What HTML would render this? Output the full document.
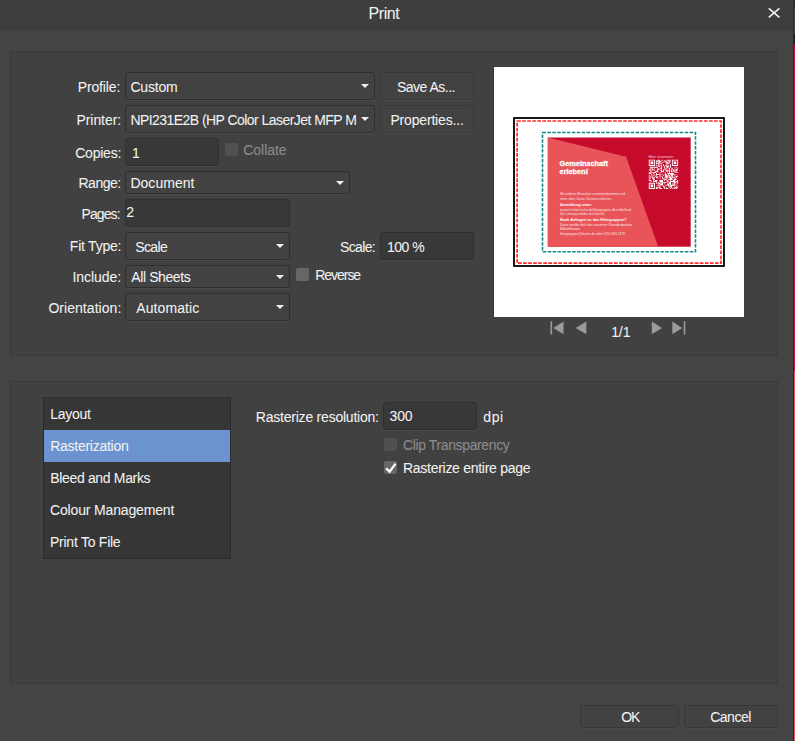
<!DOCTYPE html>
<html><head><meta charset="utf-8">
<style>
*{margin:0;padding:0;box-sizing:border-box}
html,body{width:795px;height:741px;overflow:hidden;background:#444444;font-family:"Liberation Sans",sans-serif;color:#ececec}
.a{position:absolute}
.t{position:absolute;font-size:14px;line-height:20px;white-space:nowrap;-webkit-text-stroke:0.05px currentColor}
.title{left:0;top:0;width:793px;height:31px;background:#3e3e3e}
.panel{left:10px;width:768px;background:#414141;border:1px solid #3a3a3a}
.combo{position:absolute;background:#424242;border:1px solid #2e2e2e;border-radius:3px;box-shadow:0 1px 0 #4a4a4a}
.inp{position:absolute;background:#383838;border:1px solid #2e2e2e;border-radius:3px;box-shadow:0 1px 0 #4a4a4a}
.btn{position:absolute;background:#424242;border:1px solid #383838;border-radius:3px;box-shadow:0 1px 0 #4a4a4a}
.tri{position:absolute;width:0;height:0;border-left:4px solid transparent;border-right:4px solid transparent;border-top:4px solid #f0f0f0}
.cb{position:absolute;width:13px;height:13px;background:#505050;border-radius:2px}
.list{position:absolute;left:43px;top:397px;width:188px;height:162px;background:#363636;border:1px solid #2c2c2c}
.sel{position:absolute;left:44px;top:430px;width:186px;height:32px;background:#6a93d0}
</style></head><body>
<div class="a" style="left:793px;top:0;width:1px;height:741px;background:#2a2a2a"></div>
<div class="a" style="left:794px;top:0;width:1px;height:8px;background:#333"></div>
<div class="a" style="left:794px;top:8px;width:1px;height:26px;background:#474747"></div>
<div class="a" style="left:794px;top:34px;width:1px;height:10px;background:#1c1c1c"></div>
<div class="a" style="left:794px;top:44px;width:1px;height:327px;background:#c8103a"></div>
<div class="a" style="left:794px;top:371px;width:1px;height:370px;background:#e55a5e"></div>

<div class="a title"></div>
<svg class="a" style="left:765px;top:5px" width="18" height="16" viewBox="765 5 18 16"><path d="M768.8 8.4 L779.4 17.4 M779.4 8.4 L768.8 17.4" stroke="#f0f0f0" stroke-width="1.6" fill="none"/></svg>

<div class="a panel" style="top:51px;height:305px"></div>
<div class="a panel" style="top:381px;height:303px"></div>

<div class="combo" style="left:125px;top:72px;width:250px;height:28px"></div>
<div class="tri" style="left:361px;top:84px"></div>
<div class="btn" style="left:380px;top:72px;width:94px;height:28px"></div>
<div class="combo" style="left:125px;top:105px;width:250px;height:28px"></div>
<div class="tri" style="left:361px;top:117px"></div>
<div class="btn" style="left:380px;top:105px;width:94px;height:28px"></div>
<div class="inp" style="left:125px;top:138px;width:94px;height:28px"></div>
<div class="cb" style="left:225px;top:143px"></div>
<div class="combo" style="left:125px;top:171px;width:225px;height:23px"></div>
<div class="tri" style="left:336px;top:181px"></div>
<div class="inp" style="left:125px;top:199px;width:165px;height:28px"></div>
<div class="combo" style="left:125px;top:232px;width:165px;height:28px"></div>
<div class="tri" style="left:276px;top:244px"></div>
<div class="inp" style="left:380px;top:232px;width:94px;height:28px"></div>
<div class="combo" style="left:125px;top:265px;width:165px;height:23px"></div>
<div class="tri" style="left:276px;top:275px"></div>
<div class="cb" style="left:296px;top:268px;background:#666666"></div>
<div class="combo" style="left:125px;top:293px;width:165px;height:28px"></div>
<div class="tri" style="left:276px;top:305px"></div>

<div class="a" style="left:493px;top:66px;width:251px;height:251px;background:#3a3a3a"></div>
<svg class="a" style="left:494px;top:67px" width="250" height="250" viewBox="494 67 250 250">
<rect x="494" y="67" width="250" height="250" fill="#ffffff"/>
<rect x="514" y="118" width="210" height="148" fill="none" stroke="#000" stroke-width="1.8"/>
<rect x="517.1" y="121" width="203.9" height="142.2" fill="none" stroke="#ff2b2b" stroke-width="1.7" stroke-dasharray="3.7 1.35"/>
<rect x="542.5" y="132.5" width="153" height="119.2" fill="none" stroke="#12898b" stroke-width="1.6" stroke-dasharray="3.5 1.4"/>
<rect x="547.8" y="137.5" width="142.9" height="109.2" fill="#c60a2b"/>
<polygon points="547.8,137.5 626.1,156.7 658.2,246.7 547.8,246.7" fill="#e85458"/>
<g fill="#fff" stroke="#fff" stroke-width="0.3" font-family="Liberation Sans" font-weight="bold" font-size="7.8px">
<text x="559.6" y="165.8" textLength="48.4" lengthAdjust="spacingAndGlyphs">Gemeinschaft</text>
<text x="559.6" y="173.6" textLength="28.5" lengthAdjust="spacingAndGlyphs">erleben!</text>
</g>
<g fill="#fff" font-family="Liberation Sans" font-size="4px" opacity="0.85">
<text x="560" y="195.4" textLength="65" lengthAdjust="spacingAndGlyphs">Mit anderen Menschen zusammenkommen und</text>
<text x="560" y="200.2" textLength="52" lengthAdjust="spacingAndGlyphs">mehr über Jesus Christus erfahren.</text>
<text x="560" y="210.6" textLength="71" lengthAdjust="spacingAndGlyphs">www.ich-liebe-kirche.de/kleingruppen, Anschließend</text>
<text x="560" y="214.8" textLength="45" lengthAdjust="spacingAndGlyphs">Die Leitung meldet sich bei dir.</text>
<text x="560" y="226" textLength="72" lengthAdjust="spacingAndGlyphs">Dann melde dich bei unserem Standortpastor</text>
<text x="560" y="230.2" textLength="20" lengthAdjust="spacingAndGlyphs">Matthias</text>
<text x="560" y="234.5" textLength="65" lengthAdjust="spacingAndGlyphs">kleingruppen@kirche.de oder 0151 863 2179</text>
</g>
<g fill="#fff" font-family="Liberation Sans" font-weight="bold" font-size="4px">
<text x="560" y="205.8" textLength="32" lengthAdjust="spacingAndGlyphs">Anmeldung unter:</text>
<text x="560" y="221.3" textLength="66.5" lengthAdjust="spacingAndGlyphs">Noch Anfragen zu den Kleingruppen?</text>
</g>
<text x="648.4" y="158" textLength="25.5" lengthAdjust="spacingAndGlyphs" fill="#fff" opacity="0.8" font-family="Liberation Sans" font-size="3.6px">Hier scannen:</text>
<g transform="translate(648.8 159.7) scale(0.8879)" fill="#fff"><path d="M0 0h7v1h-7zM10 0h3v1h-3zM15 0h1v1h-1zM20 0h2v1h-2zM23 0h2v1h-2zM26 0h7v1h-7zM0 1h1v1h-1zM6 1h1v1h-1zM8 1h3v1h-3zM12 1h1v1h-1zM14 1h1v1h-1zM17 1h2v1h-2zM20 1h1v1h-1zM22 1h2v1h-2zM26 1h1v1h-1zM32 1h1v1h-1zM0 2h1v1h-1zM2 2h3v1h-3zM6 2h1v1h-1zM8 2h1v1h-1zM10 2h4v1h-4zM16 2h1v1h-1zM18 2h2v1h-2zM22 2h1v1h-1zM24 2h1v1h-1zM26 2h1v1h-1zM28 2h3v1h-3zM32 2h1v1h-1zM0 3h1v1h-1zM2 3h3v1h-3zM6 3h1v1h-1zM8 3h1v1h-1zM11 3h2v1h-2zM15 3h1v1h-1zM19 3h3v1h-3zM23 3h1v1h-1zM26 3h1v1h-1zM28 3h3v1h-3zM32 3h1v1h-1zM0 4h1v1h-1zM2 4h3v1h-3zM6 4h1v1h-1zM8 4h4v1h-4zM13 4h2v1h-2zM20 4h3v1h-3zM26 4h1v1h-1zM28 4h3v1h-3zM32 4h1v1h-1zM0 5h1v1h-1zM6 5h1v1h-1zM11 5h1v1h-1zM16 5h1v1h-1zM19 5h1v1h-1zM24 5h1v1h-1zM26 5h1v1h-1zM32 5h1v1h-1zM0 6h7v1h-7zM8 6h1v1h-1zM10 6h1v1h-1zM12 6h1v1h-1zM14 6h1v1h-1zM16 6h1v1h-1zM18 6h1v1h-1zM20 6h1v1h-1zM22 6h1v1h-1zM24 6h1v1h-1zM26 6h7v1h-7zM10 7h3v1h-3zM14 7h1v1h-1zM17 7h1v1h-1zM19 7h4v1h-4zM24 7h1v1h-1zM1 8h9v1h-9zM14 8h1v1h-1zM17 8h1v1h-1zM20 8h2v1h-2zM24 8h1v1h-1zM29 8h1v1h-1zM31 8h1v1h-1zM3 9h1v1h-1zM9 9h1v1h-1zM12 9h3v1h-3zM17 9h2v1h-2zM20 9h1v1h-1zM22 9h2v1h-2zM25 9h2v1h-2zM32 9h1v1h-1zM1 10h2v1h-2zM4 10h1v1h-1zM6 10h1v1h-1zM10 10h2v1h-2zM14 10h1v1h-1zM19 10h1v1h-1zM23 10h1v1h-1zM26 10h1v1h-1zM29 10h1v1h-1zM31 10h1v1h-1zM0 11h1v1h-1zM3 11h3v1h-3zM9 11h3v1h-3zM14 11h1v1h-1zM16 11h3v1h-3zM20 11h2v1h-2zM23 11h1v1h-1zM25 11h1v1h-1zM27 11h2v1h-2zM30 11h3v1h-3zM1 12h2v1h-2zM6 12h1v1h-1zM9 12h1v1h-1zM13 12h2v1h-2zM16 12h1v1h-1zM19 12h2v1h-2zM22 12h2v1h-2zM25 12h1v1h-1zM27 12h2v1h-2zM30 12h2v1h-2zM2 13h1v1h-1zM7 13h4v1h-4zM14 13h3v1h-3zM20 13h2v1h-2zM23 13h1v1h-1zM25 13h2v1h-2zM28 13h1v1h-1zM30 13h1v1h-1zM0 14h2v1h-2zM3 14h5v1h-5zM13 14h1v1h-1zM18 14h1v1h-1zM23 14h1v1h-1zM29 14h1v1h-1zM31 14h2v1h-2zM0 15h3v1h-3zM5 15h1v1h-1zM8 15h1v1h-1zM12 15h1v1h-1zM18 15h1v1h-1zM21 15h7v1h-7zM3 16h1v1h-1zM6 16h1v1h-1zM8 16h4v1h-4zM13 16h1v1h-1zM15 16h1v1h-1zM18 16h2v1h-2zM22 16h1v1h-1zM24 16h5v1h-5zM30 16h1v1h-1zM0 17h1v1h-1zM3 17h1v1h-1zM5 17h1v1h-1zM8 17h1v1h-1zM12 17h1v1h-1zM16 17h1v1h-1zM18 17h3v1h-3zM22 17h2v1h-2zM25 17h2v1h-2zM28 17h1v1h-1zM1 18h2v1h-2zM6 18h2v1h-2zM13 18h2v1h-2zM18 18h4v1h-4zM23 18h1v1h-1zM25 18h2v1h-2zM30 18h3v1h-3zM0 19h1v1h-1zM3 19h2v1h-2zM8 19h3v1h-3zM12 19h1v1h-1zM15 19h1v1h-1zM19 19h3v1h-3zM23 19h2v1h-2zM26 19h1v1h-1zM28 19h1v1h-1zM30 19h2v1h-2zM0 20h2v1h-2zM4 20h3v1h-3zM8 20h2v1h-2zM15 20h1v1h-1zM17 20h3v1h-3zM22 20h7v1h-7zM1 21h1v1h-1zM4 21h2v1h-2zM12 21h1v1h-1zM15 21h2v1h-2zM19 21h1v1h-1zM21 21h1v1h-1zM24 21h2v1h-2zM29 21h2v1h-2zM0 22h1v1h-1zM5 22h2v1h-2zM17 22h3v1h-3zM22 22h5v1h-5zM28 22h3v1h-3zM0 23h3v1h-3zM5 23h1v1h-1zM7 23h3v1h-3zM12 23h4v1h-4zM17 23h1v1h-1zM20 23h2v1h-2zM24 23h1v1h-1zM27 23h3v1h-3zM32 23h1v1h-1zM2 24h1v1h-1zM5 24h4v1h-4zM12 24h4v1h-4zM20 24h1v1h-1zM22 24h1v1h-1zM24 24h6v1h-6zM31 24h2v1h-2zM8 25h1v1h-1zM10 25h1v1h-1zM13 25h1v1h-1zM15 25h5v1h-5zM21 25h1v1h-1zM23 25h2v1h-2zM28 25h3v1h-3zM32 25h1v1h-1zM0 26h7v1h-7zM8 26h1v1h-1zM10 26h3v1h-3zM14 26h2v1h-2zM17 26h1v1h-1zM21 26h1v1h-1zM23 26h2v1h-2zM26 26h1v1h-1zM28 26h2v1h-2zM32 26h1v1h-1zM0 27h1v1h-1zM6 27h1v1h-1zM11 27h5v1h-5zM21 27h4v1h-4zM28 27h1v1h-1zM31 27h1v1h-1zM0 28h1v1h-1zM2 28h3v1h-3zM6 28h1v1h-1zM10 28h1v1h-1zM13 28h3v1h-3zM18 28h1v1h-1zM20 28h3v1h-3zM24 28h6v1h-6zM0 29h1v1h-1zM2 29h3v1h-3zM6 29h1v1h-1zM8 29h1v1h-1zM10 29h3v1h-3zM16 29h1v1h-1zM19 29h1v1h-1zM22 29h5v1h-5zM28 29h1v1h-1zM30 29h1v1h-1zM32 29h1v1h-1zM0 30h1v1h-1zM2 30h3v1h-3zM6 30h1v1h-1zM12 30h1v1h-1zM16 30h2v1h-2zM22 30h1v1h-1zM24 30h2v1h-2zM31 30h1v1h-1zM0 31h1v1h-1zM6 31h1v1h-1zM8 31h5v1h-5zM17 31h1v1h-1zM19 31h1v1h-1zM23 31h1v1h-1zM25 31h1v1h-1zM28 31h5v1h-5zM0 32h7v1h-7zM8 32h2v1h-2zM12 32h3v1h-3zM17 32h1v1h-1zM19 32h3v1h-3zM24 32h1v1h-1zM26 32h1v1h-1zM28 32h2v1h-2zM31 32h1v1h-1z"/></g>
</svg>

<svg class="a" style="left:540px;top:315px" width="160" height="25" viewBox="540 315 160 25" fill="#9b9b9b">
<rect x="550.5" y="321.3" width="1.6" height="13.2"/>
<polygon points="553.4,327.9 563.5,321.5 563.5,334.2"/>
<polygon points="575.7,327.9 586.3,321.5 586.3,334.2"/>
<polygon points="662,327.9 651.8,321.5 651.8,334.2"/>
<polygon points="682.2,327.9 672.3,321.5 672.3,334.2"/>
<rect x="683.7" y="321.3" width="1.6" height="13.2"/>
</svg>

<div class="list"></div>
<div class="sel"></div>
<div class="inp" style="left:383px;top:402px;width:94px;height:28px"></div>
<div class="cb" style="left:384px;top:438px;background:#505050"></div>
<div class="cb" style="left:384px;top:461px;background:#676767;box-shadow:0 0 0 0.5px #3a3a3a"></div>
<svg class="a" style="left:384px;top:461px" width="13" height="13" viewBox="384 461 13 13"><path d="M386.2 468.2 L389.6 471.8 L395.6 463.6" stroke="#fff" stroke-width="2.3" fill="none" stroke-linecap="butt" stroke-linejoin="miter"/></svg>

<div class="btn" style="left:580px;top:705px;width:99px;height:23px"></div>
<div class="btn" style="left:684px;top:705px;width:94px;height:23px"></div>

<div class="t" style="left:368.6px;top:4px;font-size:16px;letter-spacing:-0.45px;color:#f2f2f2">Print</div>
<div class="t" style="left:77.7px;top:77px;font-size:14px;letter-spacing:-0.13px;color:#f2f2f2">Profile:</div>
<div class="t" style="left:76.5px;top:110px;font-size:14px;letter-spacing:-0.07px;color:#f2f2f2">Printer:</div>
<div class="t" style="left:75.2px;top:143px;font-size:14px;letter-spacing:-0.22px;color:#f2f2f2">Copies:</div>
<div class="t" style="left:78.5px;top:173px;font-size:14px;letter-spacing:-0.5px;color:#f2f2f2">Range:</div>
<div class="t" style="left:81.5px;top:204px;font-size:14px;letter-spacing:-0.9px;color:#f2f2f2">Pages:</div>
<div class="t" style="left:69.8px;top:236px;font-size:14px;letter-spacing:-0.22px;color:#f2f2f2">Fit Type:</div>
<div class="t" style="left:72.5px;top:267px;font-size:14px;letter-spacing:-0.07px;color:#f2f2f2">Include:</div>
<div class="t" style="left:48.4px;top:298px;font-size:14px;letter-spacing:0.05px;color:#f2f2f2">Orientation:</div>
<div class="t" style="left:130.4px;top:77px;font-size:14px;letter-spacing:-0.18px;color:#f2f2f2">Custom</div>
<div class="t" style="left:397.0px;top:77px;font-size:14px;letter-spacing:-0.51px;color:#f2f2f2">Save As...</div>
<div class="t" style="left:130.4px;top:110px;font-size:14px;letter-spacing:-0.55px;color:#f2f2f2">NPI231E2B (HP Color LaserJet MFP M</div>
<div class="t" style="left:390.4px;top:110px;font-size:14px;letter-spacing:-0.17px;color:#f2f2f2">Properties...</div>
<div class="t" style="left:131.9px;top:143px;font-size:14px;letter-spacing:0.0px;color:#f2f2f2">1</div>
<div class="t" style="left:243.2px;top:140px;font-size:14px;letter-spacing:-0.02px;color:#8d8d8d">Collate</div>
<div class="t" style="left:130.4px;top:173px;font-size:14px;letter-spacing:0.04px;color:#f2f2f2">Document</div>
<div class="t" style="left:126.2px;top:202px;font-size:14px;letter-spacing:0.0px;color:#f2f2f2">2</div>
<div class="t" style="left:135.3px;top:237px;font-size:14px;letter-spacing:-0.65px;color:#f2f2f2">Scale</div>
<div class="t" style="left:340.0px;top:237px;font-size:14px;letter-spacing:-0.64px;color:#f2f2f2">Scale:</div>
<div class="t" style="left:387.0px;top:237px;font-size:14px;letter-spacing:-0.5px;color:#f2f2f2">100 %</div>
<div class="t" style="left:131.3px;top:267px;font-size:14px;letter-spacing:-0.4px;color:#f2f2f2">All Sheets</div>
<div class="t" style="left:315.2px;top:265px;font-size:14px;letter-spacing:-1.03px;color:#f2f2f2">Reverse</div>
<div class="t" style="left:136.3px;top:298px;font-size:14px;letter-spacing:0.09px;color:#f2f2f2">Automatic</div>
<div class="t" style="left:611.2px;top:322px;font-size:14px;letter-spacing:-0.1px;color:#f2f2f2">1/1</div>
<div class="t" style="left:50.2px;top:404px;font-size:14px;letter-spacing:-0.28px;color:#f2f2f2">Layout</div>
<div class="t" style="left:50.2px;top:436px;font-size:14px;letter-spacing:-0.26px;color:#f2f2f2">Rasterization</div>
<div class="t" style="left:50.2px;top:468px;font-size:14px;letter-spacing:-0.33px;color:#f2f2f2">Bleed and Marks</div>
<div class="t" style="left:50.0px;top:500px;font-size:14px;letter-spacing:-0.16px;color:#f2f2f2">Colour Management</div>
<div class="t" style="left:50.0px;top:532px;font-size:14px;letter-spacing:-0.25px;color:#f2f2f2">Print To File</div>
<div class="t" style="left:255.8px;top:407px;font-size:14px;letter-spacing:-0.22px;color:#f2f2f2">Rasterize resolution:</div>
<div class="t" style="left:389.4px;top:406px;font-size:14px;letter-spacing:-0.05px;color:#f2f2f2">300</div>
<div class="t" style="left:483.3px;top:407px;font-size:14px;letter-spacing:0.6px;color:#f2f2f2">dpi</div>
<div class="t" style="left:403.0px;top:435px;font-size:14px;letter-spacing:-0.38px;color:#8d8d8d">Clip Transparency</div>
<div class="t" style="left:403.0px;top:458px;font-size:14px;letter-spacing:-0.28px;color:#f2f2f2">Rasterize entire page</div>
<div class="t" style="left:621.3px;top:707px;font-size:14px;letter-spacing:-1.1px;color:#f2f2f2">OK</div>
<div class="t" style="left:710.2px;top:707px;font-size:14px;letter-spacing:-0.48px;color:#f2f2f2">Cancel</div>
</body></html>
